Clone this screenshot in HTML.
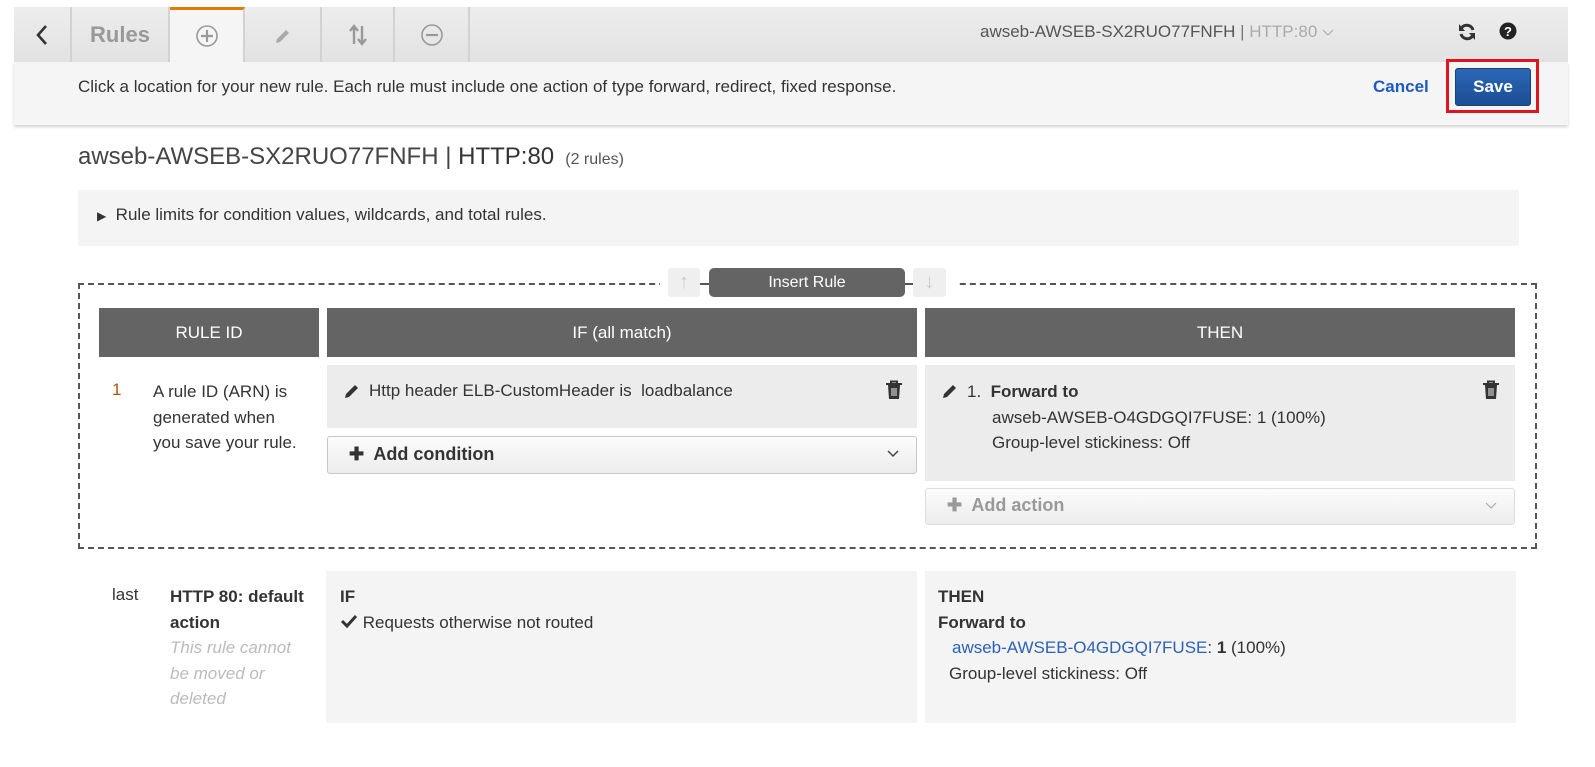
<!DOCTYPE html>
<html><head><meta charset="utf-8"><style>
*{box-sizing:border-box;margin:0;padding:0}
body{width:1595px;height:767px;background:#fff;font-family:"Liberation Sans",Arial,sans-serif;color:#333;position:relative;overflow:hidden;font-size:17px}
.a{position:absolute}
.tb{left:14px;top:7px;width:1554px;height:55px;background:linear-gradient(#ededed,#e2e2e2)}
.tab{top:7px;height:55px;border-right:2px solid #d2d2d2;display:flex;align-items:center;justify-content:center}
.bar2{left:14px;top:62px;width:1554px;height:63px;background:#f5f5f5;box-shadow:0 2px 3px rgba(0,0,0,.18)}
.hd{background:#646464;color:#fff;display:flex;align-items:center;justify-content:center;font-size:17px;top:308px;height:49px}
.btn{border:1px solid #c8c8c8;border-radius:3px;background:linear-gradient(#fcfcfc,#ececec)}
</style></head><body>
<div class="a tb"></div>
<div class="a tab" style="left:14px;width:58px"><svg width="16" height="22" viewBox="0 0 16 22"><path d="M12 2 L4 11 L12 20" stroke="#333" stroke-width="2.6" fill="none"/></svg></div>
<div class="a tab" style="left:72px;width:98px;font-weight:bold;font-size:22px;color:#999">Rules</div>
<div class="a tab" style="left:170px;width:75px;background:#f5f5f5;border-top:3px solid #e07b00"><svg width="24" height="24"><circle cx="12" cy="12" r="10" stroke="#999" stroke-width="1.6" fill="none"/><path d="M12 6v12M6 12h12" stroke="#999" stroke-width="2.2"/></svg></div>
<div class="a tab" style="left:245px;width:77px"><svg width="20" height="20" viewBox="0 0 20 20"><path d="M4 14 L13 5 L16 8 L7 17 L3 18 Z" fill="#aaa"/></svg></div>
<div class="a tab" style="left:322px;width:73px"><svg width="20" height="22" viewBox="0 0 20 22"><path d="M6 20V3M2 7l4-5 4 5" stroke="#999" stroke-width="2.4" fill="none"/><path d="M14 2v17M10 15l4 5 4-5" stroke="#999" stroke-width="2.4" fill="none"/></svg></div>
<div class="a tab" style="left:395px;width:75px"><svg width="24" height="24"><circle cx="12" cy="12" r="10" stroke="#999" stroke-width="1.6" fill="none"/><path d="M6 12h12" stroke="#999" stroke-width="2.2"/></svg></div>
<div class="a" style="left:980px;top:22px;font-size:17px;color:#555">awseb-AWSEB-SX2RUO77FNFH <span style="color:#777">|</span> <span style="color:#aaa">HTTP:80</span> <svg width="12" height="8"><path d="M1 1l5 5 5-5" stroke="#aaa" fill="none"/></svg></div>
<svg class="a" style="left:1457px;top:22px" width="20" height="20" viewBox="0 0 20 20"><path d="M16 8A6.5 6.5 0 0 0 4.5 6" stroke="#333" stroke-width="3" fill="none"/><path d="M2 2v7h6z" fill="#333"/><path d="M4 12a6.5 6.5 0 0 0 11.5 2" stroke="#333" stroke-width="3" fill="none"/><path d="M18 18v-7h-6z" fill="#333"/></svg>
<svg class="a" style="left:1499px;top:22px" width="18" height="18"><circle cx="9" cy="9" r="8.5" fill="#222"/><text x="9" y="14" fill="#fff" font-size="13" font-weight="bold" text-anchor="middle" font-family="Liberation Sans">?</text></svg>
<div class="a bar2"></div>
<div class="a" style="left:78px;top:77px;font-size:17px;color:#333">Click a location for your new rule. Each rule must include one action of type forward, redirect, fixed response.</div>
<div class="a" style="left:1373px;top:77px;font-size:17px;font-weight:bold;color:#1f5bbf">Cancel</div>
<div class="a" style="left:1446px;top:59px;width:93px;height:54px;border:3px solid #e0141e"></div>
<div class="a" style="left:1455px;top:68px;width:76px;height:38px;border-radius:3px;background:linear-gradient(#2b67b6,#1d4d94);border:1px solid #183f78;color:#fff;font-weight:bold;font-size:17px;display:flex;align-items:center;justify-content:center">Save</div>
<div class="a" style="left:78px;top:143px;font-size:24px;color:#444">awseb-AWSEB-SX2RUO77FNFH | <span style="color:#333">HTTP:80</span> <span style="font-size:16px;color:#555">&nbsp;(2 rules)</span></div>
<div class="a" style="left:78px;top:190px;width:1441px;height:56px;background:#f4f4f4"></div>
<div class="a" style="left:97px;top:205px;font-size:17px;color:#333"><span style="font-size:12px">&#9654;</span>&nbsp; Rule limits for condition values, wildcards, and total rules.</div>
<div class="a" style="left:78px;top:283px;width:1459px;height:266px;border:2px dashed #555"></div>
<div class="a" style="left:660px;top:270px;width:296px;height:26px;background:#fff"></div>
<div class="a" style="left:668px;top:268px;width:32px;height:29px;border-radius:3px;background:#efefef;color:#ccc;text-align:center;font-size:20px;line-height:29px">&#8593;</div>
<div class="a" style="left:700px;top:283px;width:9px;border-top:2px solid #555"></div>
<div class="a" style="left:709px;top:268px;width:196px;height:29px;border-radius:5px;background:#646464;color:#fff;font-size:16px;display:flex;align-items:center;justify-content:center">Insert Rule</div>
<div class="a" style="left:905px;top:283px;width:8px;border-top:2px solid #555"></div>
<div class="a" style="left:913px;top:268px;width:33px;height:29px;border-radius:3px;background:#efefef;color:#ccc;text-align:center;font-size:20px;line-height:29px">&#8595;</div>
<div class="a hd" style="left:99px;width:220px">RULE ID</div>
<div class="a hd" style="left:327px;width:590px">IF (all match)</div>
<div class="a hd" style="left:925px;width:590px">THEN</div>
<div class="a" style="left:112px;top:380px;color:#b0530f">1</div>
<div class="a" style="left:153px;top:379px;line-height:25.5px;color:#333">A rule ID (ARN) is<br>generated when<br>you save your rule.</div>
<div class="a" style="left:327px;top:365px;width:590px;height:63px;background:#ececec"></div>
<svg class="a" style="left:343px;top:382px" width="18" height="18" viewBox="0 0 18 18"><path d="M2 16 L3 12 L12 3 L15 6 L6 15 Z" fill="#333"/></svg>
<div class="a" style="left:369px;top:381px;color:#333">Http header ELB-CustomHeader is &nbsp;loadbalance</div>
<svg class="a" style="left:885px;top:380px" width="18" height="20" viewBox="0 0 18 20"><path d="M1 4h16M6 4V1.5h6V4" stroke="#333" stroke-width="2" fill="none"/><path d="M3 5h12l-1 14H4z" fill="#333"/><path d="M7 8v8M9 8v8M11 8v8" stroke="#ececec" stroke-width="1"/></svg>
<div class="a btn" style="left:327px;top:436px;width:590px;height:38px"></div>
<div class="a" style="left:349px;top:444px;font-weight:bold;font-size:18px;color:#333">&#10010;&nbsp; Add condition</div>
<svg class="a" style="left:887px;top:450px" width="12" height="8"><path d="M1 1l5 5 5-5" stroke="#444" stroke-width="1.5" fill="none"/></svg>
<div class="a" style="left:925px;top:365px;width:590px;height:116px;background:#ececec"></div>
<svg class="a" style="left:941px;top:382px" width="18" height="18" viewBox="0 0 18 18"><path d="M2 16 L3 12 L12 3 L15 6 L6 15 Z" fill="#333"/></svg>
<div class="a" style="left:967px;top:379px;line-height:25.5px;color:#333">1.&nbsp; <b>Forward to</b><br><span style="padding-left:25px">awseb-AWSEB-O4GDGQI7FUSE: 1 (100%)</span><br><span style="padding-left:25px">Group-level stickiness: Off</span></div>
<svg class="a" style="left:1482px;top:380px" width="18" height="20" viewBox="0 0 18 20"><path d="M1 4h16M6 4V1.5h6V4" stroke="#333" stroke-width="2" fill="none"/><path d="M3 5h12l-1 14H4z" fill="#333"/><path d="M7 8v8M9 8v8M11 8v8" stroke="#ececec" stroke-width="1"/></svg>
<div class="a btn" style="left:925px;top:488px;width:590px;height:37px;border-color:#ddd"></div>
<div class="a" style="left:947px;top:495px;font-weight:bold;font-size:18px;color:#999">&#10010;&nbsp; Add action</div>
<svg class="a" style="left:1485px;top:502px" width="12" height="8"><path d="M1 1l5 5 5-5" stroke="#aaa" stroke-width="1.2" fill="none"/></svg>
<div class="a" style="left:112px;top:585px;color:#333">last</div>
<div class="a" style="left:170px;top:584px;line-height:25.5px;color:#333"><b>HTTP 80: default<br>action</b><br><i style="color:#bbb">This rule cannot<br>be moved or<br>deleted</i></div>
<div class="a" style="left:326px;top:571px;width:591px;height:152px;background:#f4f4f4"></div>
<div class="a" style="left:340px;top:584px;line-height:25.5px;color:#333"><b>IF</b><br><svg width="18" height="14" viewBox="0 0 18 14"><path d="M2 7l5 5 9-10" stroke="#333" stroke-width="3" fill="none"/></svg> Requests otherwise not routed</div>
<div class="a" style="left:925px;top:571px;width:591px;height:152px;background:#f4f4f4"></div>
<div class="a" style="left:938px;top:584px;line-height:25.5px;color:#333"><b>THEN</b><br><b>Forward to</b><br><span style="padding-left:14px;color:#2d60b8">awseb-AWSEB-O4GDGQI7FUSE</span>: <b>1</b> (100%)<br><span style="padding-left:11px">Group-level stickiness: Off</span></div>
</body></html>
